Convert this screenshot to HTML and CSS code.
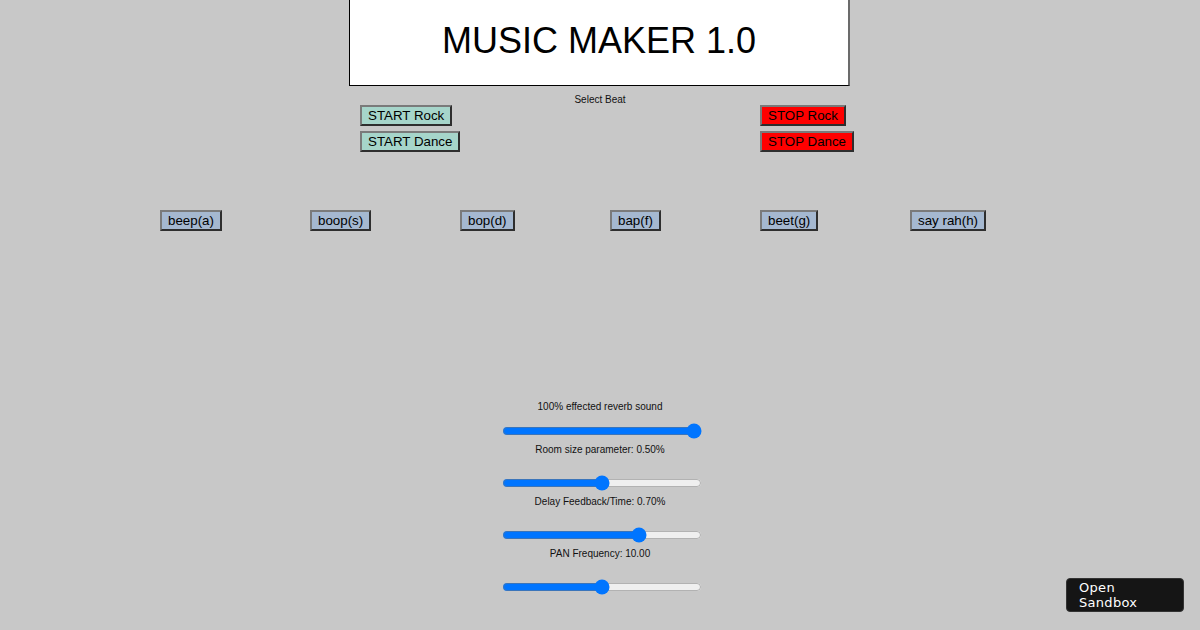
FILE: index.html
```html
<!DOCTYPE html>
<html>
<head>
<meta charset="utf-8">
<link rel="stylesheet" href="styles.css">
</head>
<body>
<div class="app">
  <header class="title-box"><h1 class="title">MUSIC MAKER 1.0</h1></header>
  <p class="select-label">Select Beat</p>
  <div class="beat-controls">
    <div class="beat-col">
      <button class="btn btn-start">START Rock</button>
      <button class="btn btn-start">START Dance</button>
    </div>
    <div class="beat-col">
      <button class="btn btn-stop">STOP Rock</button>
      <button class="btn btn-stop">STOP Dance</button>
    </div>
  </div>
  <div class="sounds">
    <div class="sound-cell"><button class="btn btn-sound">beep(a)</button></div>
    <div class="sound-cell"><button class="btn btn-sound">boop(s)</button></div>
    <div class="sound-cell"><button class="btn btn-sound">bop(d)</button></div>
    <div class="sound-cell"><button class="btn btn-sound">bap(f)</button></div>
    <div class="sound-cell"><button class="btn btn-sound">beet(g)</button></div>
    <div class="sound-cell"><button class="btn btn-sound">say rah(h)</button></div>
  </div>
  <div class="effects">
    <p class="fx-label fx-first">100% effected reverb sound</p>
    <input class="slider" type="range" min="0" max="100" value="100">
    <p class="fx-label">Room size parameter: 0.50%</p>
    <input class="slider" type="range" min="0" max="100" value="50">
    <p class="fx-label">Delay Feedback/Time: 0.70%</p>
    <input class="slider" type="range" min="0" max="100" value="70">
    <p class="fx-label">PAN Frequency: 10.00</p>
    <input class="slider" type="range" min="0" max="100" value="50">
  </div>
</div>
<button class="sandbox-btn">Open Sandbox</button>
</body>
</html>
```

FILE: styles.css
```css
html, body {
  margin: 0;
  padding: 0;
  background: #c8c8c8;
  font-family: "Liberation Sans", Arial, sans-serif;
  color: #000;
  overflow: hidden;
}
.app {
  width: 1200px;
  height: 630px;
}
.title-box {
  width: 498px;
  height: 85px;
  margin: 0 auto 0 349px;
  background: #fff;
  border-left: 1px solid #000;
  border-bottom: 1px solid #000;
  border-right: 2px solid #6b6b6b;
  display: flex;
  align-items: center;
  justify-content: center;
}
.title {
  margin: 0;
  font-size: 36px;
  font-weight: normal;
  line-height: 40px;
  padding-bottom: 4px;
}
.select-label {
  margin: 9px 0 0;
  font-size: 10px;
  line-height: 10px;
  text-align: center;
  color: #111;
}
.beat-controls {
  display: flex;
  padding-left: 360px;
}
.beat-col {
  display: flex;
  flex-direction: column;
  align-items: flex-start;
  gap: 5px;
  width: 400px;
}
.btn {
  font-family: "Liberation Sans", Arial, sans-serif;
  font-size: 13.33px;
  line-height: 15px;
  padding: 1px 6px;
  margin: 0;
  border-width: 2px;
  border-style: solid;
  border-color: #7a7a7a #2e2e2e #2e2e2e #7a7a7a;
  color: #000;
  cursor: pointer;
}
.btn-start { background: #a6d5ca; }
.btn-stop { background: #ff0000; }
.btn-sound { background: #a5b8d0; }
.sounds {
  display: grid;
  grid-template-columns: repeat(6, 150px);
  padding-left: 160px;
  margin-top: 58px;
}
.sound-cell {
  display: flex;
}
.effects {
  display: flex;
  flex-direction: column;
  align-items: center;
  margin-top: 170px;
}
.fx-label {
  margin: 0;
  font-size: 10px;
  line-height: 12px;
  color: #111;
}
.fx-first {
  margin-bottom: 10px;
}
.slider {
  width: 200px;
  margin: 4px 0 5px 4px;
}
.fx-label + .slider {
  margin-top: 19px;
}
.fx-first + .slider {
  margin-top: 0;
}
.sandbox-btn {
  position: fixed;
  right: 16px;
  bottom: 18px;
  width: 118px;
  height: 34px;
  background: #151515;
  color: #fff;
  border: 1px solid #333;
  border-radius: 4px;
  font-family: "DejaVu Sans", sans-serif;
  font-size: 13px;
  line-height: 15px;
  text-align: left;
  padding: 1px 12px;
  letter-spacing: 0.3px;
}
```
